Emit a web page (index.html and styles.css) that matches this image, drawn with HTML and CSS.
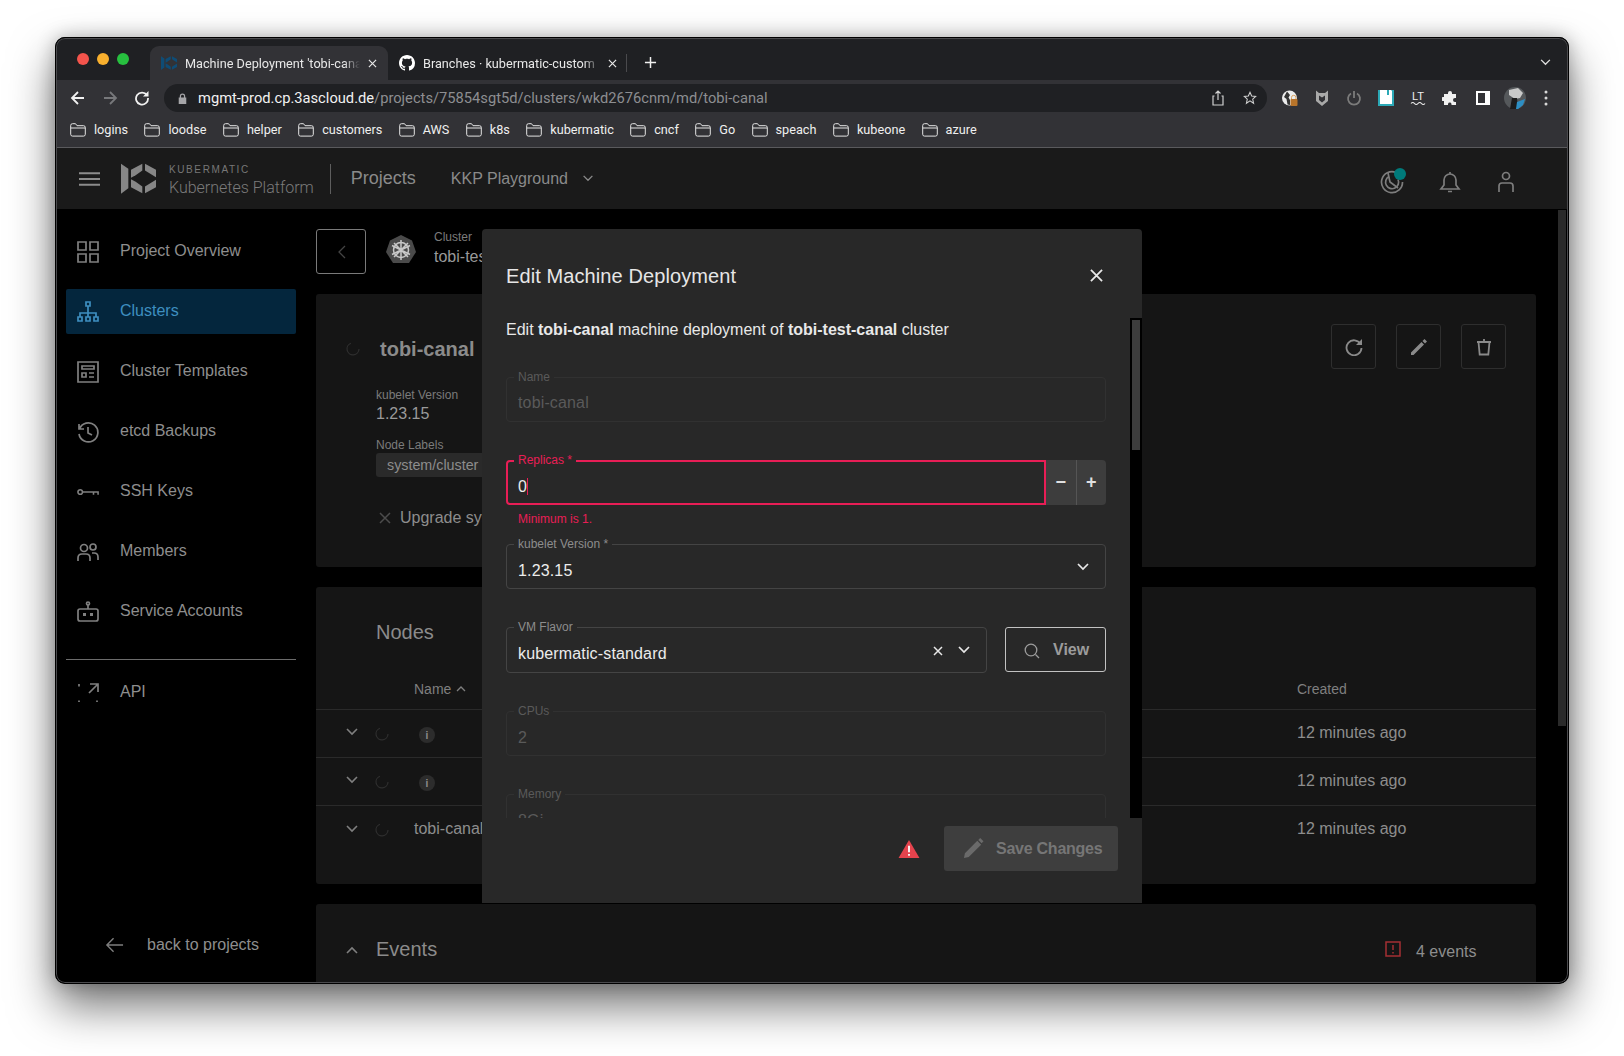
FILE: index.html
```html
<!DOCTYPE html>
<html lang="en">
<head>
<meta charset="utf-8">
<title>Machine Deployment</title>
<link rel="stylesheet" href="styles.css">
</head>
<body>
<div class="window">
  <div class="tabstrip">
    <div class="lights"><i class="l-red"></i><i class="l-yellow"></i><i class="l-green"></i></div>
    <div class="tab tab-active">
      <svg class="fav" viewBox="0 0 105 92"><g fill="#0f4c75"><path d="M0 2l22 15v58L0 92z"/><path d="M30 20l34-18v20L44 36l-14 8z"/><path d="M30 72l34 18V70L44 56l-14-8z"/><path d="M72 2l33 18v22L72 22z"/><path d="M72 90l33-18V50L72 70z"/></g></svg>
      <span class="tab-title">Machine Deployment 'tobi-canal</span>
      <svg class="tab-x" viewBox="0 0 10 10"><path d="M1 1l8 8M9 1l-8 8"/></svg>
    </div>
    <div class="tab">
      <svg class="fav" viewBox="0 0 16 16"><path fill="#fff" d="M8 0C3.58 0 0 3.58 0 8c0 3.54 2.29 6.53 5.47 7.59.4.07.55-.17.55-.38 0-.19-.01-.82-.01-1.49-2.01.37-2.53-.49-2.69-.94-.09-.23-.48-.94-.82-1.13-.28-.15-.68-.52-.01-.53.63-.01 1.08.58 1.23.82.72 1.21 1.87.87 2.33.66.07-.52.28-.87.51-1.07-1.78-.2-3.64-.89-3.64-3.95 0-.87.31-1.59.82-2.15-.08-.2-.36-1.02.08-2.12 0 0 .67-.21 2.2.82.64-.18 1.32-.27 2-.27s1.36.09 2 .27c1.53-1.04 2.2-.82 2.2-.82.44 1.1.16 1.92.08 2.12.51.56.82 1.27.82 2.15 0 3.07-1.87 3.75-3.65 3.95.29.25.54.73.54 1.48 0 1.07-.01 1.93-.01 2.2 0 .21.15.46.55.38A8.01 8.01 0 0 0 16 8c0-4.42-3.58-8-8-8z"/></svg>
      <span class="tab-title">Branches · kubermatic-custom</span>
      <svg class="tab-x" viewBox="0 0 10 10"><path d="M1 1l8 8M9 1l-8 8"/></svg>
    </div>
    <svg class="tab-plus" viewBox="0 0 14 14"><path d="M7 1v12M1 7h12"/></svg>
    <svg class="tab-list" viewBox="0 0 12 8"><path d="M1 1l5 5 5-5"/></svg>
  </div>

  <div class="toolbar">
    <svg class="nav-ico" viewBox="0 0 16 16"><path d="M14 8H2.500M8 2L2 8l6 6"/></svg>
    <svg class="nav-ico nav-off" viewBox="0 0 16 16"><path d="M2 8h11.500M8 2l6 6-6 6"/></svg>
    <svg class="nav-ico" viewBox="0 0 16 16"><path d="M13 5.200A6 6 0 1 0 14 8"/><path class="solid" d="M14.500 1v5.500H9z"/></svg>
    <div class="omnibox">
      <svg class="lock" viewBox="0 0 10 12"><path d="M2 5V3.500a3 3 0 0 1 6 0V5h1.200v7H.8V5zM3.400 5h3.200V3.500a1.600 1.600 0 0 0-3.200 0z"/></svg>
      <span class="url"><b>mgmt-prod.cp.3ascloud.de</b>/projects/75854sgt5d/clusters/wkd2676cnm/md/tobi-canal</span>
      <svg class="omni-ico" viewBox="0 0 14 16"><path d="M3.500 6H2v9h10V6h-1.500M7 10V1M4.500 3.500L7 1l2.500 2.500"/></svg>
      <svg class="omni-ico" viewBox="0 0 16 16"><path d="M8 1.500l1.900 4.300 4.600.5-3.400 3.100 1 4.600L8 11.200l-4.100 2.800 1-4.600L1.500 6.300l4.600-.5z"/></svg>
    </div>
    <div class="exts">
      <svg viewBox="0 0 16 16"><circle cx="7.500" cy="8" r="7.500" fill="#ececec"/><path d="M5 1.500l3 3.500-1.500 2.500L8 10v5l-2.500-.5L4.500 9 2 7z" fill="#333"/><path d="M9.500 9V7.500a2.200 2.200 0 0 1 4.400 0V9" fill="none" stroke="#d9a25f" stroke-width="1"/><rect x="8.500" y="9" width="7" height="7" rx="1" fill="#b8742a"/></svg>
      <svg viewBox="0 0 16 16"><path d="M2 .5L5 3h6l3-2.500v10.500L8 16 2 11z" fill="#a9a9a9"/><path d="M5 5.500l3 2 3-2V10l-3 2.500L5 10z" fill="#323236"/></svg>
      <svg viewBox="0 0 16 16"><path d="M5 3.500a6 6 0 1 0 6 0M8 1v7" fill="none" stroke="#7b7b7b" stroke-width="1.800"/></svg>
      <svg viewBox="0 0 16 16"><path d="M0 0h16v16H0z" fill="#2ba9b7"/><path d="M2 0h11l1 1v13H2z" fill="#fff"/><path d="M9 0h2v5H9z" fill="#2ba9b7"/></svg>
      <svg viewBox="0 0 16 16"><text class="lt" x="8" y="10" text-anchor="middle">LT</text><path d="M1 13.500q1.800-2 3.500 0t3.500 0 3.500 0 3.500 0" fill="none" stroke="#eee" stroke-width="1.100"/></svg>
      <svg viewBox="0 0 16 16"><path d="M6 3a2 2 0 0 1 4 0v1h4v4h-1a2 2 0 0 0 0 4h1v3H9.500v-1a1.800 1.800 0 0 0-3.500 0v1H2v-4H1a2 2 0 0 1 0-4h1V4h4z" fill="#f1f1f1"/></svg>
      <svg viewBox="0 0 16 16"><path d="M1 1h14v14H1z" fill="#fff"/><path d="M3 3h7v10H3z" fill="#323236"/></svg>
      <svg class="avatar" viewBox="0 0 22 22"><circle cx="11" cy="11" r="11" fill="#55585b"/><path d="M5 3l9-2 5 5-3 5-5 1-6-4z" fill="#c9c9c9"/><path d="M8 11h5l1 11H6z" fill="#1c1c1c"/><path d="M13 15l8-3-2 6-5 4h-2z" fill="#2d8fc4"/></svg>
    </div>
    <svg class="dots" viewBox="0 0 4 16"><circle cx="2" cy="2" r="1.500"/><circle cx="2" cy="8" r="1.500"/><circle cx="2" cy="14" r="1.500"/></svg>
  </div>

  <div class="bookmarks">
    <div class="bm"><svg viewBox="0 0 16 14"><path d="M.7 2.500q0-1.800 1.800-1.800h3l1.500 2h6.500q1.800 0 1.800 1.800v6.800q0 1.800-1.800 1.800h-11q-1.800 0-1.800-1.800zM.7 5h14.600"/></svg>logins</div>
    <div class="bm"><svg viewBox="0 0 16 14"><path d="M.7 2.500q0-1.800 1.800-1.800h3l1.500 2h6.500q1.800 0 1.800 1.800v6.800q0 1.800-1.800 1.800h-11q-1.800 0-1.800-1.800zM.7 5h14.600"/></svg>loodse</div>
    <div class="bm"><svg viewBox="0 0 16 14"><path d="M.7 2.500q0-1.800 1.800-1.800h3l1.500 2h6.500q1.800 0 1.800 1.800v6.800q0 1.800-1.800 1.800h-11q-1.800 0-1.800-1.800zM.7 5h14.600"/></svg>helper</div>
    <div class="bm"><svg viewBox="0 0 16 14"><path d="M.7 2.500q0-1.800 1.800-1.800h3l1.500 2h6.500q1.800 0 1.800 1.800v6.800q0 1.800-1.800 1.800h-11q-1.800 0-1.800-1.800zM.7 5h14.600"/></svg>customers</div>
    <div class="bm"><svg viewBox="0 0 16 14"><path d="M.7 2.500q0-1.800 1.800-1.800h3l1.500 2h6.500q1.800 0 1.800 1.800v6.800q0 1.800-1.800 1.800h-11q-1.800 0-1.800-1.800zM.7 5h14.600"/></svg>AWS</div>
    <div class="bm"><svg viewBox="0 0 16 14"><path d="M.7 2.500q0-1.800 1.800-1.800h3l1.500 2h6.500q1.800 0 1.800 1.800v6.800q0 1.800-1.800 1.800h-11q-1.800 0-1.800-1.800zM.7 5h14.600"/></svg>k8s</div>
    <div class="bm"><svg viewBox="0 0 16 14"><path d="M.7 2.500q0-1.800 1.800-1.800h3l1.500 2h6.500q1.800 0 1.800 1.800v6.800q0 1.800-1.800 1.800h-11q-1.800 0-1.800-1.800zM.7 5h14.600"/></svg>kubermatic</div>
    <div class="bm"><svg viewBox="0 0 16 14"><path d="M.7 2.500q0-1.800 1.800-1.800h3l1.500 2h6.500q1.800 0 1.800 1.800v6.800q0 1.800-1.800 1.800h-11q-1.800 0-1.800-1.800zM.7 5h14.600"/></svg>cncf</div>
    <div class="bm"><svg viewBox="0 0 16 14"><path d="M.7 2.500q0-1.800 1.800-1.800h3l1.500 2h6.500q1.800 0 1.800 1.800v6.800q0 1.800-1.800 1.800h-11q-1.800 0-1.800-1.800zM.7 5h14.600"/></svg>Go</div>
    <div class="bm"><svg viewBox="0 0 16 14"><path d="M.7 2.500q0-1.800 1.800-1.800h3l1.500 2h6.500q1.800 0 1.800 1.800v6.800q0 1.800-1.800 1.800h-11q-1.800 0-1.800-1.800zM.7 5h14.600"/></svg>speach</div>
    <div class="bm"><svg viewBox="0 0 16 14"><path d="M.7 2.500q0-1.800 1.800-1.800h3l1.500 2h6.500q1.800 0 1.800 1.800v6.800q0 1.800-1.800 1.800h-11q-1.800 0-1.800-1.800zM.7 5h14.600"/></svg>kubeone</div>
    <div class="bm"><svg viewBox="0 0 16 14"><path d="M.7 2.500q0-1.800 1.800-1.800h3l1.500 2h6.500q1.800 0 1.800 1.800v6.800q0 1.800-1.800 1.800h-11q-1.800 0-1.800-1.800zM.7 5h14.600"/></svg>azure</div>
  </div>

  <header class="appbar">
    <svg class="burger" viewBox="0 0 22 14"><path d="M0 1h22M0 7h22M0 13h22"/></svg>
    <svg class="logo" viewBox="0 0 105 92"><g fill="#868686"><path d="M0 2l22 15v58L0 92z"/><path d="M30 20l34-18v20L44 36l-14 8z"/><path d="M30 72l34 18V70L44 56l-14-8z"/><path d="M72 2l33 18v22L72 22z"/><path d="M72 90l33-18V50L72 70z"/></g></svg>
    <div class="brand"><span class="brand-top">KUBERMATIC</span><span class="brand-sub">Kubernetes Platform</span></div>
    <a class="ab-projects">Projects</a>
    <a class="ab-project">KKP Playground<svg viewBox="0 0 12 8"><path d="M1 1l5 5 5-5"/></svg></a>
    <div class="ab-right">
      <span class="ab-ico ab-ico-help"><svg viewBox="0 0 24 24"><path d="M16 2.500A10.500 10.500 0 1 0 22.500 12"/><path d="M9 6.500A6.500 6.500 0 1 0 18 9.500"/><path d="M8 3l2 9 8 6"/></svg><i class="teal-dot"></i></span>
      <span class="ab-ico"><svg viewBox="0 0 24 24"><path d="M3 19h18l-3-4V10a6 6 0 0 0-12 0v5zM12 2v2M10 21.500h4"/></svg></span>
      <span class="ab-ico"><svg viewBox="0 0 24 24"><circle cx="12" cy="6" r="3.500"/><path d="M5 22v-6q0-3 3-3h8q3 0 3 3v6"/></svg></span>
    </div>
  </header>

  <div class="appbody">
    <nav class="sidebar">
      <a class="nav"><svg viewBox="0 0 22 22"><path d="M1 1h8v8H1zM13 1h8v8h-8zM1 13h8v8H1zM13 13h8v8h-8z"/></svg>Project Overview</a>
      <a class="nav nav-active"><svg viewBox="0 0 22 22"><path d="M9 1h4v4H9zM1 16h4v4H1zM9 16h4v4H9zM17 16h4v4h-4zM11 5v11M3 16v-4h16v4"/></svg>Clusters</a>
      <a class="nav"><svg viewBox="0 0 22 22"><path d="M1 1h20v20H1zM5 5h12v3H5zM5 12h4v4H5zM12 12h5M12 16h5"/></svg>Cluster Templates</a>
      <a class="nav"><svg viewBox="0 0 22 22"><path d="M2 3v5h5M2.500 8A9.500 9.500 0 1 1 2 13M11 6v6l4 2"/></svg>etcd Backups</a>
      <a class="nav"><svg viewBox="0 0 24 22"><circle cx="3.500" cy="11" r="2.500"/><path d="M6 11h17v3M18 11v3"/></svg>SSH Keys</a>
      <a class="nav"><svg viewBox="0 0 22 22"><circle cx="7" cy="7" r="3.500"/><circle cx="16" cy="6" r="3"/><path d="M1 20v-3q0-4 4-4h4q4 0 4 4v3M15 12h2q4 0 4 4v3"/></svg>Members</a>
      <a class="nav"><svg viewBox="0 0 22 22"><circle cx="11" cy="2.500" r="1.500"/><path d="M11 4v4M3 8h16q2 0 2 2v8q0 2-2 2H3q-2 0-2-2v-8q0-2 2-2z"/><path class="solid" d="M6 12h3v3H6zM13 12h3v3h-3z"/></svg>Service Accounts</a>
      <hr class="nav-sep">
      <a class="nav"><svg viewBox="0 0 22 22"><path d="M13 2h8v8M21 2l-9 9M2 2v2.500M2 18.500V20M20 18.500V20"/></svg>API</a>
      <a class="back"><svg viewBox="0 0 20 16"><path d="M19 8H2M9 1L2 8l7 7"/></svg>back to projects</a>
    </nav>

    <main class="content">
      <div class="subhead">
        <button class="backbtn"><svg viewBox="0 0 10 16"><path d="M8 2L2 8l6 6"/></svg></button>
        <svg class="k8s" viewBox="0 0 30 30"><path d="M15 0l11 5.500 4 11.500-7 11H7L0 17 4 5.500z" fill="#4a4a4a"/><g fill="none" stroke="#c8c8c8" stroke-width="1.500"><circle cx="15" cy="15" r="7.500"/><path d="M15 5v20M6 10.500l18 9M24 10.500l-18 9M8 22l14-14M22 22L8 8"/></g></svg>
        <div class="crumb"><span class="crumb-l">Cluster</span><span class="crumb-v">tobi-test-canal</span></div>
      </div>

      <section class="card card-md">
        <div class="md-title"><svg class="spin" viewBox="0 0 14 14"><path d="M5 1.200A6 6 0 1 0 13 7"/></svg><h2>tobi-canal</h2></div>
        <dl class="props">
          <dt>kubelet Version</dt><dd>1.23.15</dd>
          <dt class="dt2">Node Labels</dt><dd><span class="chip">system/cluster</span></dd>
        </dl>
        <div class="upgrade"><svg viewBox="0 0 12 12"><path d="M1 1l10 10M11 1L1 11"/></svg>Upgrade system</div>
        <div class="actions">
          <button class="act"><svg viewBox="0 0 18 18"><path d="M15.500 6A7.500 7.500 0 1 0 16.500 10" fill="none"/><path class="solid" d="M17 1v6h-6z"/></svg></button>
          <button class="act"><svg viewBox="0 0 18 18"><path class="solid" d="M1 14.500L11.500 4l2.500 2.500L3.500 17H1zM12.500 3l2-2 2.500 2.500-2 2z"/></svg></button>
          <button class="act"><svg viewBox="0 0 18 18"><path d="M2 4h14M3.500 4l1.200 12.500h8.600L14.500 4M9 1v3"/></svg></button>
        </div>
      </section>

      <section class="card card-nodes">
        <h3>Nodes</h3>
        <div class="thead"><span class="th-name">Name<svg viewBox="0 0 10 6"><path d="M1 5l4-4 4 4"/></svg></span><span class="th-created">Created</span></div>
        <div class="row"><svg class="chev" viewBox="0 0 12 8"><path d="M1 1l5 5 5-5"/></svg><svg class="spin" viewBox="0 0 14 14"><path d="M5 1.200A6 6 0 1 0 13 7"/></svg><span class="r-name"><i class="info">i</i></span><span class="r-created">12 minutes ago</span></div>
        <div class="row"><svg class="chev" viewBox="0 0 12 8"><path d="M1 1l5 5 5-5"/></svg><svg class="spin" viewBox="0 0 14 14"><path d="M5 1.200A6 6 0 1 0 13 7"/></svg><span class="r-name"><i class="info">i</i></span><span class="r-created">12 minutes ago</span></div>
        <div class="row"><svg class="chev" viewBox="0 0 12 8"><path d="M1 1l5 5 5-5"/></svg><svg class="spin" viewBox="0 0 14 14"><path d="M5 1.200A6 6 0 1 0 13 7"/></svg><span class="r-name r-text">tobi-canal-7d9f</span><span class="r-created">12 minutes ago</span></div>
      </section>

      <section class="card card-events">
        <svg class="chev" viewBox="0 0 12 8"><path d="M1 7l5-5 5 5"/></svg>
        <h3>Events</h3>
        <svg class="ev-ico" viewBox="0 0 16 16"><path d="M1 1h14v14H1z" fill="none"/><path d="M8 4v5M8 11v1.500"/></svg>
        <span class="ev-count">4 events</span>
      </section>
    </main>
    <div class="page-thumb"></div>
  </div>

  <div class="dialog">
    <div class="dlg-head">
      <h1>Edit Machine Deployment</h1>
      <svg class="dlg-x" viewBox="0 0 14 14"><path d="M1 1l12 12M13 1L1 13"/></svg>
    </div>
    <div class="dlg-mid">
      <div class="dlg-form">
        <p class="dlg-desc">Edit <b>tobi-canal</b> machine deployment of <b>tobi-test-canal</b> cluster</p>
        <div class="field field-off fm-name"><label>Name</label><span>tobi-canal</span></div>
        <div class="rep">
          <div class="field field-err"><label>Replicas *</label><span>0<i class="caret"></i></span></div>
          <div class="stepper"><b>−</b><b>+</b></div>
        </div>
        <div class="err">Minimum is 1.</div>
        <div class="field fm-kube"><label>kubelet Version *</label><span>1.23.15</span><svg class="sel" viewBox="0 0 12 8"><path d="M1 1l5 5 5-5"/></svg></div>
        <div class="flavor">
          <div class="field"><label>VM Flavor</label><span>kubermatic-standard</span><svg class="clr" viewBox="0 0 10 10"><path d="M1 1l8 8M9 1l-8 8"/></svg><svg class="sel" viewBox="0 0 12 8"><path d="M1 1l5 5 5-5"/></svg></div>
          <button class="view"><svg viewBox="0 0 16 16"><circle cx="7" cy="7" r="5.800"/><path d="M11.500 11.500L15 15"/></svg>View</button>
        </div>
        <div class="field field-off fm-cpu"><label>CPUs</label><span>2</span></div>
        <div class="field field-off"><label>Memory</label><span>8Gi</span></div>
      </div>
      <div class="dlg-track"><i></i></div>
    </div>
    <div class="dlg-foot">
      <svg class="warn" viewBox="0 0 24 22"><path d="M12 1l11.500 20H.5z" fill="#e5434d"/><path d="M12 7.500v7M12 16.500v2" stroke="#fff" stroke-width="2"/></svg>
      <button class="save"><svg viewBox="0 0 22 22"><path d="M1 21l1-5L15 3l4 4L6 20zM16 2l2-2 3.500 3.500-2 2z"/></svg>Save Changes</button>
    </div>
  </div>
</div>
</body>
</html>
```

FILE: styles.css
```css
* { box-sizing: border-box; }
html, body { margin: 0; height: 100%; }
body {
  background: #fff;
  padding: 37px 55px;
  font-family: "Liberation Sans", Arial, sans-serif;
  overflow: hidden;
}
h1, h2, h3, p, dl, dd, dt { margin: 0; font-weight: normal; }
svg { display: block; flex: none; }

.window {
  position: relative;
  width: 1514px;
  height: 947px;
  background: #000;
  border-radius: 10px;
  overflow: hidden;
  display: flex;
  flex-direction: column;
  box-shadow: 0 22px 45px rgba(0, 0, 0, .55), 0 0 18px rgba(0, 0, 0, .25);
}
.window::after {
  content: "";
  position: absolute;
  inset: 0;
  border: 1px solid #000;
  border-radius: 10px;
  box-shadow: inset 0 0 0 1px #4a4a4d;
  pointer-events: none;
}

/* browser chrome */
.tabstrip { height: 43px; flex: none; background: #1f2023; display: flex; align-items: flex-end; padding-left: 95px; position: relative; color: #e8e8e8; }
.lights { position: absolute; left: 22px; top: 16px; display: flex; gap: 8px; }
.lights i { width: 12px; height: 12px; border-radius: 50%; }
.l-red { background: #f4544c; }
.l-yellow { background: #f9b02e; }
.l-green { background: #27c03f; }
.tab { width: 240px; height: 34px; display: flex; align-items: center; padding: 0 11px; font: 12.700px Roboto, "Liberation Sans", sans-serif; gap: 8px; position: relative; }
.tab-active { background: #323236; border-radius: 9px 9px 0 0; width: 238px; }
.tab .fav { width: 16px; height: 16px; }
.tab-title { flex: 1; white-space: nowrap; overflow: hidden; -webkit-mask-image: linear-gradient(to left, transparent 0, #000 16px); mask-image: linear-gradient(to left, transparent 0, #000 16px); }
.tab-x { width: 9px; height: 9px; fill: none; stroke: #e8e8e8; stroke-width: 1.300; }
.tab:not(.tab-active)::after { content: ""; position: absolute; right: 1px; top: 8px; height: 18px; width: 1px; background: #4a4a4d; }
.tab-plus { width: 13px; height: 13px; margin: 0 0 11px 16px; fill: none; stroke: #f0f0f0; stroke-width: 1.600; }
.tab-list { width: 11px; height: 7px; margin: 0 18px 14px auto; fill: none; stroke: #e0e0e0; stroke-width: 1.500; }

.toolbar { height: 36px; flex: none; background: #323236; display: flex; align-items: center; padding: 0 0 0 15px; }
.nav-ico { width: 16px; height: 16px; margin-right: 16px; fill: none; stroke: #f1f1f1; stroke-width: 1.800; }
.nav-ico .solid { fill: #f1f1f1; stroke: none; }
.nav-off { stroke: #77787b; }
.omnibox { width: 1103px; height: 28px; margin-left: -2px; border-radius: 14px; background: #1f2023; display: flex; align-items: center; padding: 0 10px 0 14px; }
.lock { width: 9px; height: 11px; fill: #a5a5a8; margin-right: 11px; }
.url { font-family: Roboto, "Liberation Sans", sans-serif; font-size: 14.700px; color: #8d8e91; flex: 1; white-space: nowrap; }
.url b { font-weight: 400; color: #f1f1f1; }
.omni-ico { width: 14px; height: 16px; margin-left: 18px; fill: none; stroke: #d0d0d0; stroke-width: 1.200; }
.exts { display: flex; align-items: center; gap: 16.100px; margin-left: 15px; }
.exts svg { width: 16px; height: 16px; }
.exts .avatar { width: 22px; height: 22px; margin: 0 -3px; }
.lt { font: 400 11px "Liberation Sans", sans-serif; fill: #eee; }
.dots { width: 4px; height: 16px; margin-left: 21px; fill: #d8d8d8; }

.bookmarks { height: 32px; flex: none; background: #323236; border-bottom: 1px solid #5a5a5d; display: flex; align-items: center; padding: 0 0 4px 15px; gap: 16.400px; color: #efefef; font-family: Roboto, "Liberation Sans", sans-serif; font-size: 12.700px; }
.bm { display: flex; align-items: center; gap: 8px; }
.bm svg { width: 16px; height: 14px; fill: none; stroke: #e4e4e4; stroke-width: 1; }

/* app bar */
.appbar { height: 61px; flex: none; background: #1a1a1a; display: flex; align-items: center; padding-left: 24px; color: #8a8a8a; }
.burger { width: 21px; height: 14px; fill: none; stroke: #8c8c8c; stroke-width: 2; }
.logo { width: 35px; height: 31px; margin-left: 21px; }
.brand { display: flex; flex-direction: column; margin-left: 13px; padding-right: 16px; border-right: 1px solid #5e5e5e; height: 30px; justify-content: flex-start; }
.brand-top { font-size: 10px; letter-spacing: 1.600px; color: #777; line-height: 11px; }
.brand-sub { font-family: Roboto, "Liberation Sans", sans-serif; font-size: 16px; color: #7a7a7a; line-height: 20px; font-weight: 300; margin-top: 3px; }
.ab-projects { font-size: 18px; margin-left: 20px; }
.ab-project { font-size: 16px; margin-left: 35px; display: flex; align-items: center; gap: 14px; }
.ab-project svg { width: 12px; height: 7px; fill: none; stroke: #8a8a8a; stroke-width: 1.500; }
.ab-right { margin-left: auto; display: flex; gap: 32px; padding: 7px 51px 0 0; }
.ab-ico { position: relative; width: 24px; height: 24px; }
.ab-ico-help { margin-right: 2px; }
.ab-ico svg { fill: none; stroke: #7d7d7d; stroke-width: 1.700; }
.teal-dot { position: absolute; right: -2px; top: -2px; width: 12px; height: 12px; border-radius: 50%; background: #007a7a; }

.appbody { flex: 1; min-height: 0; display: flex; position: relative; }
.sidebar { width: 261px; flex: none; display: flex; flex-direction: column; gap: 15px; padding: 20px 20px 30px 11px; color: #8e8e8e; font-size: 16px; }
.nav { height: 45px; display: flex; align-items: center; gap: 21px; padding: 0 0 1px 11px; border-radius: 2px; white-space: nowrap; }
.nav svg { width: 22px; height: 22px; margin-top: 2px; fill: none; stroke: #808080; stroke-width: 1.700; }
.nav .solid { fill: #808080; stroke: none; }
.nav-active { background: #04263d; color: #3e8fc0; }
.nav-active svg { stroke: #3e8fc0; }
.nav-sep { width: 100%; margin: 10px 0 -5px; border: 0; border-top: 1px solid #6c6c6c; }
.back { margin-top: auto; display: flex; align-items: center; gap: 23px; padding-left: 39px; }
.back svg { width: 19px; height: 16px; fill: none; stroke: #7d7d7d; stroke-width: 1.500; }

.content { flex: 1; min-width: 0; overflow: hidden; padding: 20px 33px 0 0; display: flex; flex-direction: column; gap: 20px; color: #8d8d8d; }
.page-thumb { position: absolute; right: 3px; top: 1px; width: 8px; height: 516px; background: #2a2a2a; }
.subhead { height: 45px; flex: none; display: flex; align-items: center; }
.backbtn { width: 50px; height: 45px; border: 1px solid #7a7a7a; border-radius: 3px; background: transparent; padding: 0 0 0 20px; }
.backbtn svg { width: 10px; height: 16px; fill: none; stroke: #444; stroke-width: 1.300; }
.k8s { width: 30px; height: 30px; margin: 0 0 4px 20px; }
.crumb { display: flex; flex-direction: column; margin-left: 18px; padding-bottom: 8px; white-space: nowrap; }
.crumb-l { font-size: 12px; line-height: 16px; color: #7b7b7b; }
.crumb-v { font-size: 16px; line-height: 20px; color: #999; margin-top: 2px; }

.card { flex: none; background: #151515; border-radius: 3px; position: relative; }
.card-md { height: 273px; padding: 40px 0 0 60px; }
.md-title { display: flex; align-items: center; position: relative; }
.md-title .spin { position: absolute; left: -30px; top: 8px; }
.spin { width: 14px; height: 14px; fill: none; stroke: #2f2f2f; stroke-width: 1.200; }
.md-title h2 { font-size: 20px; font-weight: 700; margin-left: 4px; line-height: 30px; color: #8b8b8b; }
.props { margin-top: 23px; }
.props dt { font-size: 12px; line-height: 16px; color: #7b7b7b; }
.props dd { font-size: 16px; line-height: 20px; color: #9a9a9a; margin-top: 1px; }
.props .dt2 { margin-top: 13px; }
.props .dt2 + dd { margin-top: 0; }
.chip { display: inline-block; background: #2a2a2a; padding: 0 11px; line-height: 24px; font-size: 14.300px; border-radius: 3px; color: #8d8d8d; white-space: nowrap; }
.upgrade { display: flex; align-items: center; gap: 9px; margin: 32px 0 0 3px; font-size: 16px; color: #8d8d8d; white-space: nowrap; }
.upgrade svg { width: 12px; height: 12px; fill: none; stroke: #4c4c4c; stroke-width: 1.500; }
.actions { position: absolute; right: 30px; top: 30px; display: flex; gap: 20px; }
.act { width: 45px; height: 45px; background: transparent; border: 1px solid #2e2e2e; border-radius: 3px; padding: 0; display: flex; align-items: center; justify-content: center; }
.act svg { width: 18px; height: 18px; fill: none; stroke: #8a8a8a; stroke-width: 1.800; }
.act .solid { fill: #8a8a8a; stroke: none; }

.card-nodes { height: 297px; padding-top: 30px; }
.card-nodes h3 { font-size: 20px; line-height: 30px; margin-left: 60px; color: #8b8b8b; }
.thead { height: 63px; border-bottom: 1px solid #2a2a2a; position: relative; font-size: 14px; color: #7f7f7f; padding-top: 34px; line-height: 16px; }
.th-name { position: absolute; left: 98px; display: flex; align-items: center; gap: 5px; }
.th-name svg { width: 10px; height: 6px; fill: none; stroke: #7f7f7f; stroke-width: 1.300; }
.th-created { position: absolute; left: 981px; }
.row { height: 48px; border-bottom: 1px solid #2a2a2a; display: flex; align-items: center; position: relative; font-size: 16px; padding-bottom: 3px; }
.row:last-child { border-bottom: 0; }
.chev { width: 12px; height: 8px; fill: none; stroke: #7f7f7f; stroke-width: 1.600; margin-left: 30px; }
.row .spin { margin-left: 17px; margin-top: 3px; }
.r-name { position: absolute; left: 98px; top: 11px; line-height: 24px; white-space: nowrap; }
.info { display: flex; align-items: center; justify-content: center; width: 16px; height: 16px; border-radius: 50%; background: #2c2c2c; color: #8c8c8c; font: 700 10px "Liberation Sans", sans-serif; margin: 6px 0 0 5px; }
.r-created { position: absolute; left: 981px; top: 11px; line-height: 24px; }

.card-events { height: 120px; display: flex; align-items: flex-start; padding-top: 30px; }
.card-events h3 { font-size: 20px; line-height: 30px; margin-left: 18px; color: #8b8b8b; }
.card-events .chev { margin-top: 12px; }
.ev-ico { width: 16px; height: 16px; position: absolute; left: 1069px; top: 37px; fill: none; stroke: #a42f33; stroke-width: 1.500; }
.ev-count { position: absolute; left: 1100px; top: 37px; font-size: 16px; line-height: 22px; }

/* dialog */
.dialog { position: absolute; left: 427px; top: 192px; width: 660px; height: 674px; background: #282828; border-radius: 4px; display: flex; flex-direction: column; color: #e8e8e8; }
.dlg-head { height: 89px; flex: none; display: flex; align-items: flex-start; padding: 33px 39px 0 24px; }
.dlg-head h1 { font-size: 20px; line-height: 28px; flex: 1; color: #e6e6e6; letter-spacing: .1px; }
.dlg-x { width: 13px; height: 13px; margin-top: 7px; fill: none; stroke: #e8e8e8; stroke-width: 1.900; }
.dlg-mid { height: 500px; flex: none; display: flex; overflow: hidden; }
.dlg-form { flex: 1; min-width: 0; padding: 0 24px; }
.dlg-desc { font-size: 16px; line-height: 22px; padding-top: 1px; margin-bottom: 36px; }
.dlg-desc b { font-weight: 700; }
.dlg-track { width: 12px; background: #000; padding: 2px; flex: none; }
.dlg-track i { display: block; height: 130px; background: #3d3d3d; }
.field { position: relative; height: 45px; border: 1px solid #444; border-radius: 4px; padding: 0 11px; display: flex; align-items: center; font-size: 16px; color: #ececec; }
.field > span { padding-top: 8px; white-space: nowrap; letter-spacing: .15px; }
.field label { position: absolute; left: 7px; top: -8px; padding: 0 4px; background: #282828; font-size: 12px; line-height: 14px; color: #8d8d8d; }
.field-off { border-color: #313131; color: #5a5a5a; }
.field-off label { color: #5a5a5a; }
.fm-name { margin-bottom: 38px; }
.fm-name > span { padding-top: 7px; }
.rep { display: flex; }
.rep .field { flex: 1; border: 2px solid #e81e56; border-radius: 4px 0 0 4px; padding: 0 10px; }
.rep .field > span { padding-top: 9px; }
.rep label { left: 6px; top: -9px; color: #e81e56; }
.caret { display: inline-block; width: 1px; height: 17px; background: #e81e56; vertical-align: -3px; }
.stepper { width: 60px; height: 45px; flex: none; display: flex; background: #3d3d3d; border-radius: 0 4px 4px 0; }
.stepper b { flex: 1; display: flex; align-items: center; justify-content: center; font-size: 18px; color: #e0e0e0; }
.stepper b + b { border-left: 1px solid #555; }
.err { font-size: 12px; line-height: 14px; color: #e81e56; padding: 7px 0 0 12px; height: 39px; }
.fm-kube { margin-bottom: 38px; }
.sel { width: 12px; height: 8px; position: absolute; right: 16px; top: 18px; fill: none; stroke: #e8e8e8; stroke-width: 1.700; }
.flavor { display: flex; gap: 18px; margin-bottom: 38px; align-items: flex-start; }
.flavor .field { flex: 1; height: 46px; }
.clr { width: 10px; height: 10px; position: absolute; right: 43px; top: 18px; fill: none; stroke: #e8e8e8; stroke-width: 1.500; }
.view { width: 101px; height: 45px; flex: none; background: transparent; border: 1px solid #c2c2c2; border-radius: 3px; color: #9c9c9c; font: 700 16px "Liberation Sans", sans-serif; display: flex; align-items: center; gap: 13px; padding: 0 0 0 18px; }
.view svg { width: 16px; height: 16px; fill: none; stroke: #9c9c9c; stroke-width: 1.300; margin-top: 3px; }
.fm-cpu { margin-bottom: 38px; }
.dlg-foot { flex: 1; background: #282828; display: flex; justify-content: flex-end; align-items: flex-start; gap: 24px; padding: 8px 24px 0 0; position: relative; }
.warn { width: 22px; height: 20px; margin-top: 13px; }
.save { width: 174px; height: 45px; border: 0; border-radius: 3px; background: #3e3e3e; color: #767676; font: 700 16px "Liberation Sans", sans-serif; letter-spacing: -.25px; display: flex; align-items: center; gap: 12px; padding: 0 0 0 19px; white-space: nowrap; }
.save svg { width: 21px; height: 21px; fill: #6a6a6a; }
```
